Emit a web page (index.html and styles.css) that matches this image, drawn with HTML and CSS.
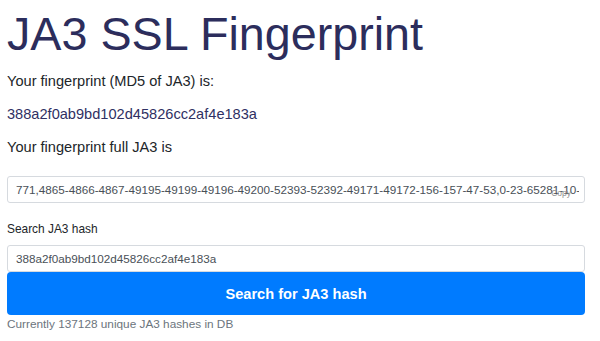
FILE: index.html
```html
<!DOCTYPE html>
<html>
<head>
<meta charset="utf-8">
<link rel="stylesheet" href="styles.css">
</head>
<body>
<div class="container">
  <h1 class="title">JA3 SSL Fingerprint</h1>
  <p class="text p1">Your fingerprint (MD5 of JA3) is:</p>
  <p class="text hash">388a2f0ab9bd102d45826cc2af4e183a</p>
  <p class="text p3">Your fingerprint full JA3 is</p>
  <div class="full-wrap">
    <input class="field full" type="text" readonly value="771,4865-4866-4867-49195-49199-49196-49200-52393-52392-49171-49172-156-157-47-53,0-23-65281-10-11-35-16-5-13-18-51-45-43-27-17513,29-23-24,0">
    <span class="copy">Copy</span>
  </div>
  <form class="search">
    <label class="label">Search JA3 hash</label>
    <input class="field search-input" type="text" value="388a2f0ab9bd102d45826cc2af4e183a">
    <button class="btn" type="button">Search for JA3 hash</button>
    <div class="note">Currently 137128 unique JA3 hashes in DB</div>
  </form>
</div>
</body>
</html>
```
FILE: styles.css
```css
html, body {
  margin: 0;
  padding: 0;
  background: #ffffff;
}
body {
  font-family: "Liberation Sans", Arial, sans-serif;
  color: #212529;
}
.container {
  width: 578px;
  padding-left: 7px;
}
.title {
  margin: 7px 0 0 0;
  font-size: 46.7px;
  line-height: 54px;
  font-weight: 400;
  color: #2c2d5c;
}
.text {
  margin: 0;
  font-size: 14.6px;
  line-height: 20px;
}
.p1 { margin-top: 10px; }
.hash { margin-top: 13px; color: #2f3063; }
.p3 { margin-top: 13px; }
.full-wrap {
  position: relative;
  margin-top: 19px;
}
.field {
  display: block;
  box-sizing: border-box;
  width: 100%;
  height: 27px;
  margin: 0;
  border: 1px solid #d6dadf;
  border-radius: 3px;
  background: #fff;
  color: #495057;
  font-family: "Liberation Sans", Arial, sans-serif;
  font-size: 11.7px;
  padding: 0 5px 0 8px;
  outline: none;
}
.copy {
  position: absolute;
  right: 14px;
  top: 12px;
  font-size: 8.5px;
  line-height: 10px;
  color: #8f8f8f;
}
.search {
  margin: 18px 0 0 0;
}
.label {
  display: block;
  font-size: 11.9px;
  line-height: 16px;
  color: #212529;
  margin-bottom: 8px;
}
.btn {
  display: block;
  width: 100%;
  height: 43px;
  border: 0;
  border-radius: 4px;
  background: #007bff;
  color: #fff;
  font-family: "Liberation Sans", Arial, sans-serif;
  font-size: 14.6px;
  font-weight: 700;
  margin: 0;
  padding: 0;
}
.note {
  margin-top: 1px;
  font-size: 11.8px;
  line-height: 16px;
  color: #6c757d;
}
```
